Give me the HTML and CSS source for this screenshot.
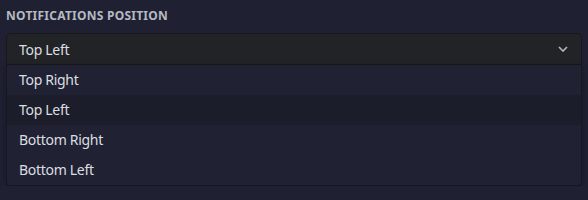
FILE: index.html
```html
<!DOCTYPE html>
<html lang="en">
<head>
  <meta charset="UTF-8" />
  <title>Notifications position</title>
  <link rel="stylesheet" href="styles.css">
</head>
<body>
  <div class="field">
    <h5 class="field-title">Notifications Position</h5>

    <div class="select">
      <div class="select-value">
        <span>Top Left</span>
        <svg class="chevron" width="10" height="6" viewBox="0 0 10 6">
          <path d="M1 1l4 4 4-4" fill="none" stroke="currentColor" stroke-width="1.6" />
        </svg>
      </div>

      <!-- options -->
      <div class="select-popout">
        <div class="option">Top Right</div>
        <div class="option selected">Top Left</div>
        <div class="option">Bottom Right</div>
        <div class="option">Bottom Left</div>
      </div>
    </div>
  </div>
</body>
</html>
```

FILE: styles.css
```css
body { margin:0; background:#1f2133; font-family:'Noto Sans','Open Sans',sans-serif; color:#dbdee1; }
.field { padding:8px 6px 0 6px; }
.field-title { margin:0 0 9px 0; font-size:12px; font-weight:700; text-transform:uppercase; color:#b5bac1; letter-spacing:0.25px; line-height:16px; }

/* select */
.select { width:576px; }
.select-value { display:flex; align-items:center; justify-content:space-between; height:30px; padding:0 12px 0 12px; background:#222326; border:1px solid #17181c; border-radius:4px 4px 0 0; font-size:14px; letter-spacing:-0.3px; }
.chevron { color:#b5bac1; margin-right:1px; }

/* popout */
.select-popout { background:#202234; border:1px solid #16171f; border-top:none; border-radius:0 0 4px 4px; box-shadow:0 2px 6px rgba(0,0,0,0.3); }
.option { height:30px; line-height:30px; padding:0 12px; font-size:14px; letter-spacing:-0.3px; color:#dbdee1; }
.option.selected { background:#1b1d2a; }
```
